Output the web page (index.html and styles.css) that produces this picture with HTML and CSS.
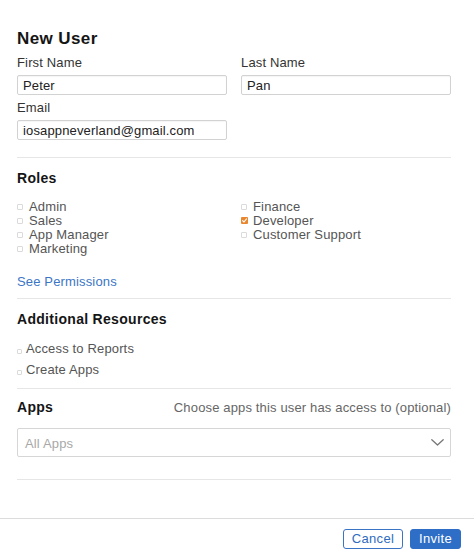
FILE: index.html
```html
<!DOCTYPE html>
<html lang="en">
<head>
<meta charset="utf-8">
<title>New User</title>
<link rel="stylesheet" href="styles.css">
</head>
<body>
<div class="modal">
  <main class="content">
    <h1 class="title">New User</h1>
    <div class="grid">
      <div class="field">
        <label class="label">First Name</label>
        <input class="input" type="text" value="Peter">
      </div>
      <div class="field">
        <label class="label">Last Name</label>
        <input class="input" type="text" value="Pan">
      </div>
      <div class="field field-email">
        <label class="label">Email</label>
        <input class="input" type="text" value="iosappneverland@gmail.com">
      </div>
    </div>

    <hr class="divider divider-first">

    <h2 class="heading">Roles</h2>
    <div class="grid roles">
      <ul class="checklist">
        <li class="check"><span class="box"></span>Admin</li>
        <li class="check"><span class="box"></span>Sales</li>
        <li class="check"><span class="box"></span>App Manager</li>
        <li class="check"><span class="box"></span>Marketing</li>
      </ul>
      <ul class="checklist">
        <li class="check"><span class="box"></span>Finance</li>
        <li class="check"><span class="box box-on"><svg viewBox="0 0 7 7" width="7" height="7"><path d="M1.6 3.6 L3 5 L5.5 1.9" fill="none" stroke="#fff" stroke-width="1.1" stroke-linecap="round" stroke-linejoin="round"/></svg></span>Developer</li>
        <li class="check"><span class="box"></span>Customer Support</li>
      </ul>
    </div>
    <a class="link" href="#">See Permissions</a>

    <hr class="divider">

    <h2 class="heading">Additional Resources</h2>
    <ul class="resources">
      <li class="res"><span class="box box-sm"></span>Access to Reports</li>
      <li class="res"><span class="box box-sm"></span>Create Apps</li>
    </ul>

    <hr class="divider divider-apps">

    <div class="apps-head">
      <h2 class="heading heading-inline">Apps</h2>
      <span class="hint">Choose apps this user has access to (optional)</span>
    </div>
    <div class="select">
      <span class="placeholder">All Apps</span>
      <svg class="chevron" viewBox="0 0 13 7" width="13" height="7"><path d="M0.8 0.8 L6.5 6 L12.2 0.8" fill="none" stroke="#777" stroke-width="1.3" stroke-linecap="round" stroke-linejoin="round"/></svg>
    </div>

    <hr class="divider divider-last">
  </main>
  <footer class="footer">
    <button class="btn btn-secondary" type="button">Cancel</button>
    <button class="btn btn-primary" type="button">Invite</button>
  </footer>
</div>
</body>
</html>
```

FILE: styles.css
```css
* { box-sizing: border-box; }

html, body {
  margin: 0;
  padding: 0;
  background: #fff;
}

body {
  font-family: "Liberation Sans", Arial, sans-serif;
  font-size: 13px;
  color: #333;
  letter-spacing: 0.15px;
}

.modal {
  width: 474px;
  height: 559px;
  display: flex;
  flex-direction: column;
}

.content {
  flex: 1;
  padding: 28px 23px 0 17px;
}

.title {
  margin: 0 0 6px;
  font-size: 17px;
  line-height: 21px;
  font-weight: 700;
  letter-spacing: 0.4px;
  color: #151515;
}

.grid {
  display: grid;
  grid-template-columns: 210px 210px;
  column-gap: 14px;
}

.field {
  display: flex;
  flex-direction: column;
}

.field-email {
  margin-top: 5px;
}

.label {
  font-size: 13px;
  line-height: 16px;
  color: #333;
  margin-bottom: 4px;
}

.input {
  height: 20px;
  width: 210px;
  margin: 0;
  padding: 0 5px;
  border: 1px solid #d2d2d2;
  border-radius: 2px;
  box-shadow: inset 0 1px 1px rgba(0, 0, 0, 0.04);
  font-family: inherit;
  font-size: 13px;
  letter-spacing: 0.15px;
  color: #222;
  background: #fff;
  outline: none;
}

.divider {
  margin: 0;
  border: 0;
  border-top: 1px solid #e6e6e6;
}

.divider-first { margin-top: 17px; }

.heading {
  margin: 11px 0 0;
  font-size: 14px;
  line-height: 18px;
  font-weight: 700;
  letter-spacing: 0.3px;
  color: #151515;
}

.roles {
  margin-top: 13px;
}

.checklist, .resources {
  list-style: none;
  margin: 0;
  padding: 0;
}

.check {
  display: flex;
  align-items: center;
  height: 14px;
  line-height: 14px;
  color: #555;
}

.box {
  flex: none;
  width: 6px;
  height: 6px;
  margin-right: 6px;
  margin-top: -1px;
  border: 1px solid #dadada;
  border-radius: 1px;
  background: #fff;
  display: flex;
  align-items: center;
  justify-content: center;
}

.box-on {
  width: 7px;
  height: 7px;
  margin-right: 5px;
  border: 0;
  background: #e9872f;
}

.link {
  display: block;
  margin-top: 18px;
  line-height: 16px;
  color: #3b76c6;
  text-decoration: none;
}

.link + .divider { margin-top: 8px; }

.resources {
  margin-top: 10px;
}

.res {
  display: flex;
  align-items: center;
  height: 21px;
  line-height: 21px;
  color: #555;
}

.box-sm {
  width: 5px;
  height: 5px;
  margin-right: 4px;
  margin-top: 6px;
}

.divider-apps { margin-top: 8px; }

.apps-head {
  display: flex;
  justify-content: space-between;
  align-items: baseline;
  margin-top: 9px;
}

.heading-inline { margin: 0; }

.hint {
  color: #666;
  font-size: 13px;
}

.select {
  margin-top: 12px;
  height: 29px;
  border: 1px solid #d6d6d6;
  border-radius: 2px;
  display: flex;
  align-items: center;
  justify-content: space-between;
  padding: 0 6px 0 7px;
}

.placeholder {
  color: #a8a8a8;
  margin-top: 1px;
}

.chevron { display: block; }

.divider-last { margin-top: 22px; }

.footer {
  border-top: 1px solid #dcdcdc;
  padding: 10px 13px 10px 0;
  display: flex;
  justify-content: flex-end;
  gap: 7px;
}

.btn {
  height: 20px;
  margin: 0;
  padding: 0;
  border-radius: 3px;
  font-family: inherit;
  font-size: 13px;
  letter-spacing: 0.3px;
  line-height: 18px;
  cursor: pointer;
}

.btn-secondary {
  width: 60px;
  background: #fff;
  color: #2f6cc0;
  border: 1px solid #3a74c4;
}

.btn-primary {
  width: 51px;
  background: #2e6ec6;
  color: #fff;
  border: 1px solid #2e6ec6;
}
```
